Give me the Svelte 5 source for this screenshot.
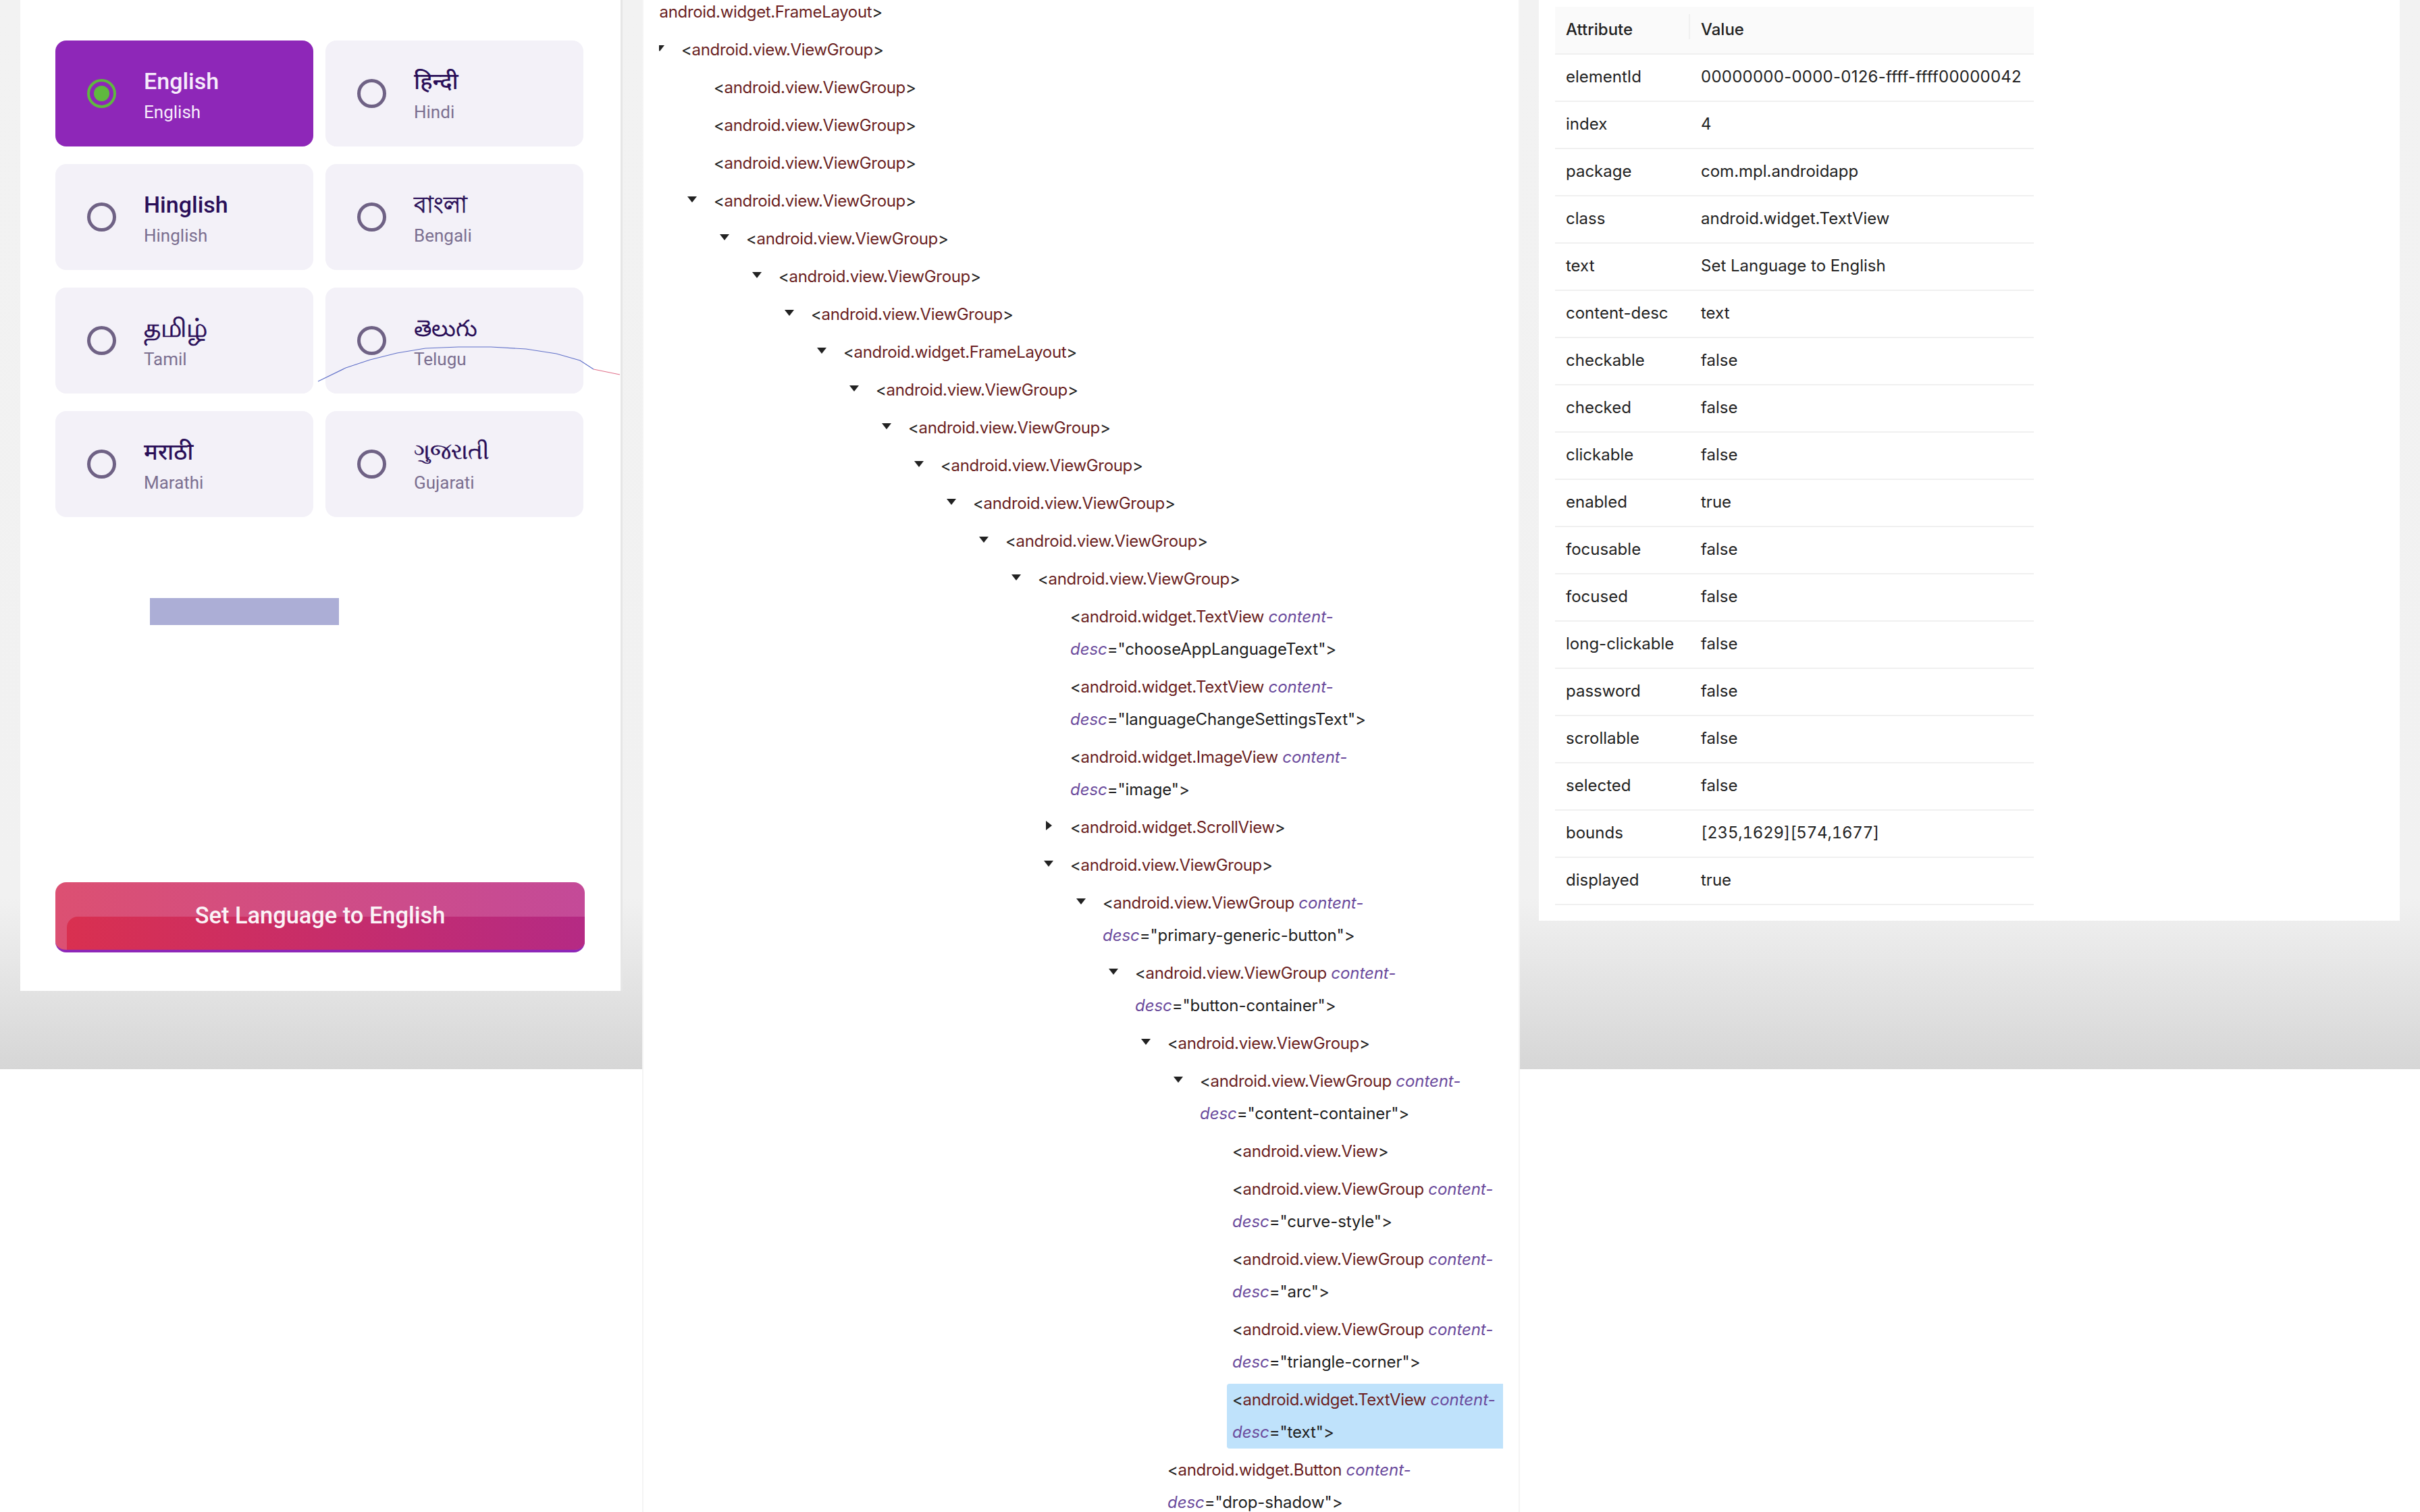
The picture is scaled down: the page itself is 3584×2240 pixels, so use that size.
<script>
  const langs = [
    { title: 'English', sub: 'English', on: true },
    { title: 'हिन्दी', sub: 'Hindi' },
    { title: 'Hinglish', sub: 'Hinglish' },
    { title: 'বাংলা', sub: 'Bengali', cls: 'bn' },
    { title: 'தமிழ்', sub: 'Tamil', cls: 'ta' },
    { title: 'తెలుగు', sub: 'Telugu' },
    { title: 'मराठी', sub: 'Marathi' },
    { title: 'ગુજરાતી', sub: 'Gujarati', cls: 'gu' }
  ];

  const VG = 'android.view.ViewGroup';
  const TV = 'android.widget.TextView';
  const tree = [
    { l: 0, tag: 'android.widget.FrameLayout' },
    { l: 1, c: 'd', tag: VG },
    { l: 2, tag: VG },
    { l: 2, tag: VG },
    { l: 2, tag: VG },
    { l: 2, c: 'd', tag: VG },
    { l: 3, c: 'd', tag: VG },
    { l: 4, c: 'd', tag: VG },
    { l: 5, c: 'd', tag: VG },
    { l: 6, c: 'd', tag: 'android.widget.FrameLayout' },
    { l: 7, c: 'd', tag: VG },
    { l: 8, c: 'd', tag: VG },
    { l: 9, c: 'd', tag: VG },
    { l: 10, c: 'd', tag: VG },
    { l: 11, c: 'd', tag: VG },
    { l: 12, c: 'd', tag: VG },
    { l: 13, tag: TV, desc: 'chooseAppLanguageText' },
    { l: 13, tag: TV, desc: 'languageChangeSettingsText' },
    { l: 13, tag: 'android.widget.ImageView', desc: 'image' },
    { l: 13, c: 'r', tag: 'android.widget.ScrollView' },
    { l: 13, c: 'd', tag: VG },
    { l: 14, c: 'd', tag: VG, desc: 'primary-generic-button' },
    { l: 15, c: 'd', tag: VG, desc: 'button-container' },
    { l: 16, c: 'd', tag: VG },
    { l: 17, c: 'd', tag: VG, desc: 'content-container' },
    { l: 18, tag: 'android.view.View' },
    { l: 18, tag: VG, desc: 'curve-style' },
    { l: 18, tag: VG, desc: 'arc' },
    { l: 18, tag: VG, desc: 'triangle-corner' },
    { l: 18, tag: TV, desc: 'text', hl: true },
    { l: 16, tag: 'android.widget.Button', desc: 'drop-shadow' }
  ];

  const attrs = [
    ['elementId', '00000000-0000-0126-ffff-ffff00000042', 'v-id'],
    ['index', '4'],
    ['package', 'com.mpl.androidapp'],
    ['class', 'android.widget.TextView'],
    ['text', 'Set Language to English'],
    ['content-desc', 'text'],
    ['checkable', 'false'],
    ['checked', 'false'],
    ['clickable', 'false'],
    ['enabled', 'true'],
    ['focusable', 'false'],
    ['focused', 'false'],
    ['long-clickable', 'false'],
    ['password', 'false'],
    ['scrollable', 'false'],
    ['selected', 'false'],
    ['bounds', '[235,1629][574,1677]', 'v-bounds'],
    ['displayed', 'true']
  ];

  const curve = [[471,565],[512,545],[548,533],[588,523],[630,516],[679,514],[727,514],[779,517],[824,524],[859,534],[879,547]];
  const curvePts = curve.map((p) => p.join(',')).join(' ');
</script>

<div class="root">
  <section class="side side-left">
    <div class="phone">
      <div class="grid">
        {#each langs as lang}
          <div class="card" class:on={lang.on}>
            <span class="radio"></span>
            <div class="labels">
              <div class="title {lang.cls ?? ''}">{lang.title}</div>
              <div class="sub">{lang.sub}</div>
            </div>
          </div>
        {/each}
      </div>
      <div class="mark"></div>
      <div class="cta">
        <div class="cta-low"></div>
        <span class="cta-text">Set Language to English</span>
      </div>
      <svg class="trace" width="889" height="600" viewBox="30 0 889 600" fill="none">
        <polyline points={curvePts} stroke="#5f6fc8" stroke-width="1.2" />
        <polyline points="879,547 918,555" stroke="#e0708a" stroke-width="1.2" />
      </svg>
    </div>
  </section>

  <section class="source">
    <div class="clip">
      <div class="tree">
        {#each tree as n}
          <div class="row" style="--level:{n.l}">
            <span class="caret-box">
              {#if n.c === 'd'}
                <svg class="caret" width="14" height="9" viewBox="0 0 14 9"><path d="M0 0H14L7 9Z" fill="#222" /></svg>
              {:else if n.c === 'r'}
                <svg class="caret caret-r" width="9" height="14" viewBox="0 0 9 14"><path d="M0 0L9 7L0 14Z" fill="#222" /></svg>
              {/if}
            </span>
            <div class="node" class:hl={n.hl}><span class="punct">&lt;</span><span class="tag">{n.tag}</span>{#if n.desc}{' '}<em class="key">content-<br />desc</em><span class="punct val">="{n.desc}"</span>{/if}<span class="punct">&gt;</span></div>
          </div>
        {/each}
      </div>
    </div>
  </section>

  <section class="side side-right">
    <div class="panel">
      <table>
        <thead>
          <tr><th><span class="cell"><span class="th-in">Attribute</span></span></th><th><span class="cell">Value</span></th></tr>
        </thead>
        <tbody>
          {#each attrs as a}
            <tr><td><span class="cell">{a[0]}</span></td><td><span class="cell {a[2] ?? ''}">{a[1]}</span></td></tr>
          {/each}
        </tbody>
      </table>
    </div>
  </section>
</div>

<style>
  :global(body) { margin: 0; background: #fff; }

  .root {
    width: 3584px;
    height: 2240px;
    display: flex;
    align-items: flex-start;
    overflow: hidden;
    font-family: Inter, "Liberation Sans", sans-serif;
  }

  .side {
    height: 1584px;
    box-sizing: border-box;
    background: linear-gradient(180deg, #f2f2f2 0%, #f1f1f1 84%, #d6d6d6 100%);
  }

  .side-left { width: 951px; padding-left: 30px; }
  .side-right { width: 1333px; padding-left: 28px; }

  .phone {
    position: relative;
    width: 892px;
    height: 1468px;
    box-sizing: border-box;
    background: #fff;
    border-right: 3px solid #e6e6e6;
    display: flex;
    flex-direction: column;
    padding-left: 52px;
    font-family: Roboto, "Noto Sans", sans-serif;
  }

  .grid {
    margin-top: 60px;
    display: grid;
    grid-template-columns: 382px 382px;
    grid-auto-rows: 157px;
    column-gap: 18px;
    row-gap: 26px;
  }

  .card {
    display: flex;
    align-items: center;
    background: #f3f1f8;
    border-radius: 16px;
    padding-left: 47px;
    box-sizing: border-box;
  }

  .card.on { background: #8e27b8; }

  .radio {
    width: 43px;
    height: 43px;
    box-sizing: border-box;
    border: 5px solid #6f6285;
    border-radius: 50%;
    flex: none;
    display: flex;
    align-items: center;
    justify-content: center;
  }

  .on .radio { border: 4px solid #5fb93f; }
  .on .radio::after {
    content: "";
    width: 23px;
    height: 23px;
    border-radius: 50%;
    background: #5fb93f;
  }

  .labels { margin-left: 41px; display: flex; flex-direction: column; padding-top: 2px; }

  .title {
    font-size: 34px;
    font-weight: 500;
    line-height: 44px;
    color: #2a0f58;
  }

  .title.bn { -webkit-text-stroke: 0.7px #2a0f58; }
  .title.ta { font-size: 39px; -webkit-text-stroke: 0.7px #2a0f58; }
  .title.gu { font-size: 33px; -webkit-text-stroke: 0.4px #2a0f58; }

  .sub {
    font-size: 26px;
    line-height: 32px;
    margin-top: 8px;
    color: #7b6f90;
  }

  .on .title, .on .sub { color: #f6ecfb; }

  .mark {
    width: 280px;
    height: 40px;
    margin: 120px 0 0 140px;
    background: #acaed6;
  }

  .cta {
    margin-top: 381px;
    width: 784px;
    height: 104px;
    border-radius: 16px;
    background: linear-gradient(90deg, #dc5072, #c44a98);
    border-bottom: 4px solid #8e27b8;
    box-sizing: border-box;
    overflow: hidden;
    position: relative;
    display: flex;
    align-items: center;
    justify-content: center;
  }

  .cta-low {
    position: absolute;
    left: 17px;
    right: 0;
    top: 51px;
    bottom: 0;
    border-top-left-radius: 16px;
    background: linear-gradient(90deg, #d93050, #b52a84);
  }

  .cta-text {
    position: relative;
    color: #fbf3f7;
    font-size: 34.4px;
    font-weight: 500;
    margin-bottom: 2px;
  }

  .trace { position: absolute; left: 0; top: 0; pointer-events: none; }

  .source {
    width: 1300px;
    height: 2240px;
    flex: none;
    box-sizing: border-box;
    background: #fff;
    border-left: 2px solid #f4f4f4;
    border-right: 2px solid #f4f4f4;
    padding-left: 23px;
    overflow: hidden;
  }

  .clip {
    width: 1250px;
    height: 2240px;
    overflow: hidden;
  }

  .tree { margin: -6px 0 0 -15px; width: 1265px; }

  .row {
    display: flex;
    margin-left: calc(48px * var(--level) - 48px);
    margin-bottom: 8px;
  }

  .caret-box { width: 48px; flex: none; }
  .caret { display: block; margin: 17px 0 0 9px; }
  .caret-r { margin: 14px 0 0 12px; }

  .node {
    flex: 1;
    min-width: 0;
    margin-left: -8px;
    padding: 0 8px;
    font-size: 24px;
    line-height: 48px;
    letter-spacing: -0.34px;
    white-space: nowrap;
    border-radius: 4px 0 0 4px;
  }

  .node.hl { background: #bfe2fb; }

  .punct { color: #202020; }
  .val { letter-spacing: -0.07px; }
  .tag { color: #6b1f22; }
  .key { color: #6a4a9c; font-style: italic; letter-spacing: -0.07px; }

  .panel {
    width: 1275px;
    height: 1364px;
    background: #fff;
    box-sizing: border-box;
    padding: 10px 0 0 24px;
  }

  table {
    width: 709px;
    border-collapse: collapse;
    table-layout: fixed;
    font-size: 24px;
    color: #222;
  }

  th, td {
    height: 70px;
    box-sizing: border-box;
    padding: 0 0 0 17px;
    text-align: left;
    border-bottom: 2px solid #f0f0f0;
    white-space: nowrap;
  }

  .cell { position: relative; top: -1.5px; }
  .v-id { letter-spacing: 0.25px; }
  .v-bounds { font-variant-numeric: tabular-nums; letter-spacing: -0.2px; }

  th {
    background: #fafafa;
    font-weight: 500;
  }

  th:first-child, td:first-child { width: 199px; padding-left: 16px; }

  th:first-child { position: relative; }
  .th-in::after {
    content: "";
    position: absolute;
    left: 182px;
    top: -8px;
    height: 37px;
    width: 2px;
    background: #f0f0f0;
  }
</style>
